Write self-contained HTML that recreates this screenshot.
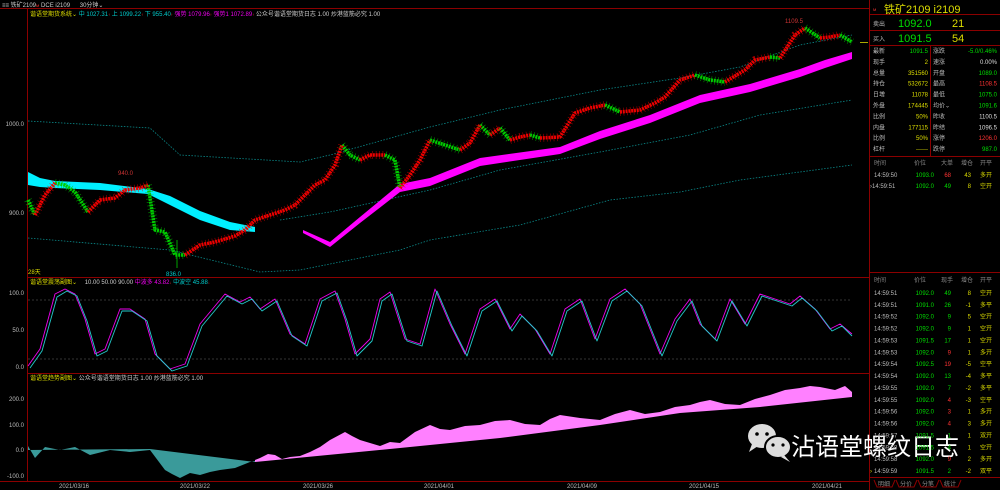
<!DOCTYPE html>
<html><head><meta charset="utf-8">
<style>
html,body{margin:0;padding:0;background:#000;width:1000px;height:490px;overflow:hidden;font-family:"Liberation Sans","Noto Sans CJK SC",sans-serif;}
svg{display:block}
text{font-family:"Liberation Sans","Noto Sans CJK SC",sans-serif;}
</style></head><body>
<svg width="1000" height="490" viewBox="0 0 1000 490" xmlns="http://www.w3.org/2000/svg">
<rect width="1000" height="490" fill="#000"/>
<g stroke="#8b0000" stroke-width="1" fill="none">
<line x1="0" y1="8.5" x2="870" y2="8.5"/>
<line x1="27.5" y1="8" x2="27.5" y2="481"/>
<line x1="27" y1="277.5" x2="870" y2="277.5"/>
<line x1="27" y1="373.5" x2="870" y2="373.5"/>
<line x1="0" y1="481.5" x2="870" y2="481.5"/>
<line x1="869.5" y1="0" x2="869.5" y2="490"/>
<line x1="870" y1="14.5" x2="1000" y2="14.5"/>
<line x1="870" y1="30.5" x2="1000" y2="30.5"/>
<line x1="870" y1="45.5" x2="1000" y2="45.5"/>
<line x1="870" y1="156.5" x2="1000" y2="156.5"/>
<line x1="930.5" y1="46" x2="930.5" y2="156"/>
<line x1="870" y1="272.5" x2="1000" y2="272.5"/>
<line x1="870" y1="477.5" x2="1000" y2="477.5"/>
</g>
<g stroke="#444" stroke-dasharray="2,2" stroke-width="0.7">
<line x1="28" y1="300" x2="852" y2="300"/>
<line x1="28" y1="359" x2="852" y2="359"/>
</g>
<text x="2" y="7" font-size="6" fill="#ccc">≡≡ 铁矿2109<tspan fill="#f33" font-size="4">M</tspan> DCE i2109  <tspan dx="8">30分钟⌄</tspan></text>
<text x="30" y="16" font-size="6" fill="#ccc"><tspan fill="#dd0">谐语堂期货系统⌄</tspan> <tspan fill="#0cc">中 1027.31</tspan><tspan fill="#f33" font-size="4">↑</tspan> <tspan fill="#0cc">上 1099.22</tspan><tspan fill="#f33" font-size="4">↑</tspan> <tspan fill="#0cc">下 955.40</tspan><tspan fill="#f33" font-size="4">↑</tspan> <tspan fill="#e0e">强势 1079.96</tspan><tspan fill="#f33" font-size="4">↑</tspan> <tspan fill="#e0e">强势1 1072.89</tspan><tspan fill="#f33" font-size="4">↑</tspan> 公众号谐语堂期货日志 1.00  炒港蓝筋必究 1.00</text>
<text x="30" y="284" font-size="6" fill="#ccc"><tspan fill="#dd0">谐语堂震荡副图⌄</tspan>  <tspan dx="6">10.00   50.00   90.00</tspan>  <tspan fill="#e0e">中波多 43.82</tspan><tspan fill="#f33" font-size="4">↓</tspan> <tspan fill="#0cc">中波空 45.88</tspan><tspan fill="#f33" font-size="4">↓</tspan></text>
<text x="30" y="380" font-size="6" fill="#ccc"><tspan fill="#dd0">谐语堂趋势副图⌄</tspan> 公众号谐语堂期货日志 1.00  炒港蓝筋必究 1.00</text>
<text x="28" y="274" font-size="6" fill="#dd0">28天</text>
<g font-size="6" fill="#bbb" text-anchor="end">
<text x="24" y="126">1000.0</text><text x="24" y="215">900.0</text>
<text x="24" y="295">100.0</text><text x="24" y="332">50.0</text><text x="24" y="369">0.0</text>
<text x="24" y="401">200.0</text><text x="24" y="427">100.0</text><text x="24" y="452">0.0</text><text x="24" y="478">-100.0</text>
</g>
<g font-size="6" fill="#bbb" text-anchor="middle">
<text x="74" y="488">2021/03/16</text><text x="195" y="488">2021/03/22</text><text x="318" y="488">2021/03/26</text><text x="439" y="488">2021/04/01</text><text x="582" y="488">2021/04/09</text><text x="704" y="488">2021/04/15</text><text x="827" y="488">2021/04/21</text>
</g>

<g fill="none" stroke="#0a8a8a" stroke-width="0.8" stroke-dasharray="1.5,1.5">
<polyline points="28,121 150,128 180,155 300,162 330,155 430,127 500,110 600,90 680,78 740,67 800,45 852,35"/>
<polyline points="280,220 330,212 430,190 500,170 600,152 690,135 760,115 852,100"/>
<polyline points="28,238 170,250 260,272 300,270 400,250 430,240 520,225 610,200 680,192 740,180 852,165"/>
</g>
<polygon fill="#00f0ff" points="28,172 40,178 55,181 100,183 148,189 170,196 200,211 230,222 255,227 255,232 230,230 200,220 170,205 148,194 100,190 55,188 40,187 28,185"/>
<polygon fill="#ff00ff" points="303,230 330,242 360,217 400,184 430,178 480,158 560,147 600,131 650,115 700,95 750,84 800,69 825,60 852,52 852,59 825,68 800,77 750,92 700,103 650,123 600,139 560,154 480,166 430,186 400,192 360,223 330,247 303,233"/>
<g fill="none" stroke-linejoin="round">
<g stroke="#0c0" stroke-width="3.5" stroke-dasharray="2,0.8">
<polyline points="28,200 35,215"/><polyline points="55,183 65,185 75,192 88,212"/><polyline points="148,185 155,230 165,232 175,255 185,255"/><polyline points="342,145 350,155 360,160"/><polyline points="385,155 395,160 400,188"/><polyline points="430,140 445,145 460,150"/><polyline points="480,125 490,135"/><polyline points="500,128 510,140"/><polyline points="530,135 540,138"/><polyline points="605,105 620,112"/><polyline points="695,75 710,80 725,82"/><polyline points="770,57 780,58"/><polyline points="805,28 820,38"/><polyline points="840,35 852,42"/>
</g>
<g stroke="#e00" stroke-width="3.5" stroke-dasharray="2,0.8">
<polyline points="35,215 45,195 55,183"/><polyline points="88,212 100,200 115,198 125,190 140,188 148,185"/><polyline points="185,255 200,245 215,242 235,236 245,230 255,220 270,215 285,210 295,205 305,195 315,185 325,180 335,165 342,145"/><polyline points="360,160 370,155 385,155"/><polyline points="400,188 410,175 420,160 430,140"/><polyline points="460,150 470,143 480,125"/><polyline points="490,135 500,128"/><polyline points="510,140 520,137 530,135"/><polyline points="540,138 560,137 575,113 590,108 605,105"/><polyline points="620,112 640,110 655,103 665,97 680,80 695,75"/><polyline points="725,82 745,70 755,60 770,57"/><polyline points="780,58 795,35 805,28"/><polyline points="820,38 830,37 840,35"/>
</g>
<g stroke="#0c0" stroke-width="8" stroke-dasharray="0.6,2.8" opacity="0.7">
<polyline points="28,200 35,215"/><polyline points="55,183 65,185 75,192 88,212"/><polyline points="148,185 155,230 165,232 175,255 185,255"/><polyline points="342,145 350,155 360,160"/><polyline points="385,155 395,160 400,188"/><polyline points="430,140 445,145 460,150"/><polyline points="480,125 490,135"/><polyline points="500,128 510,140"/><polyline points="530,135 540,138"/><polyline points="605,105 620,112"/><polyline points="695,75 710,80 725,82"/><polyline points="770,57 780,58"/><polyline points="805,28 820,38"/><polyline points="840,35 852,42"/>
</g>
<g stroke="#e00" stroke-width="8" stroke-dasharray="0.6,2.8" opacity="0.7">
<polyline points="35,215 45,195 55,183"/><polyline points="88,212 100,200 115,198 125,190 140,188 148,185"/><polyline points="185,255 200,245 215,242 235,236 245,230 255,220 270,215 285,210 295,205 305,195 315,185 325,180 335,165 342,145"/><polyline points="360,160 370,155 385,155"/><polyline points="400,188 410,175 420,160 430,140"/><polyline points="460,150 470,143 480,125"/><polyline points="490,135 500,128"/><polyline points="510,140 520,137 530,135"/><polyline points="540,138 560,137 575,113 590,108 605,105"/><polyline points="620,112 640,110 655,103 665,97 680,80 695,75"/><polyline points="725,82 745,70 755,60 770,57"/><polyline points="780,58 795,35 805,28"/><polyline points="820,38 830,37 840,35"/>
</g>
<line x1="177" y1="240" x2="177" y2="268" stroke="#0c0" stroke-width="0.8"/>
</g>
<text x="118" y="175" font-size="6" fill="#c33">940.0</text>
<text x="166" y="276" font-size="6" fill="#0cc">836.0</text>
<text x="785" y="23" font-size="6" fill="#c33">1109.5</text>
<line x1="860" y1="42.5" x2="868" y2="42.5" stroke="#aa0"/>

<polyline fill="none" stroke="#e0e" stroke-width="0.9" stroke-linejoin="round" points="28,366 40,349 55,294 65,289 75,294 85,319 95,354 105,349 120,309 130,309 145,319 155,354 170,369 185,364 200,324 225,294 240,302 250,297 260,309 275,299 290,334 305,344 320,299 335,291 345,319 355,354 370,339 380,299 390,292 405,339 420,344 435,289 450,324 465,354 480,309 495,299 510,329 520,314 535,329 550,354 565,309 580,299 595,339 610,299 625,289 640,304 660,354 675,319 690,299 700,324 715,339 730,299 745,324 760,294 775,299 790,304 800,296 815,309 830,329 840,324 852,334"/>
<polyline fill="none" stroke="#2cc" stroke-width="0.9" stroke-linejoin="round" points="30,368 42,351 57,297 67,291 77,296 87,321 97,356 107,351 122,311 132,311 147,321 157,356 172,371 187,366 202,326 227,296 242,304 252,299 262,311 277,301 292,336 307,346 322,301 337,293 347,321 357,356 372,341 382,301 392,294 407,341 422,346 437,291 452,326 467,356 482,311 497,301 512,331 522,316 537,331 552,356 567,311 582,301 597,341 612,301 627,291 642,306 662,356 677,321 692,301 702,326 717,341 732,301 747,326 762,296 777,301 792,306 802,298 817,311 832,331 842,326 852,336"/>

<polygon fill="#3a9a9a" points="28,446 35,458 45,447 60,450 75,447 90,455 110,450 130,452 150,450 165,470 172,474 180,478 190,473 200,475 210,472 220,470 235,468 250,462 255,461 255,462 150,449 28,450"/>
<polygon fill="#ff80ff" points="255,460 260,458 268,454 275,455 282,459 290,457 300,456 310,452 320,447 330,440 345,432 352,436 360,440 370,443 380,446 390,442 400,443 415,432 430,425 440,429 450,430 465,426 480,425 495,421 510,420 525,424 540,425 550,419 560,415 580,418 600,420 615,414 630,410 645,414 660,412 675,407 690,405 700,402 710,400 725,404 740,405 755,399 770,395 785,390 800,388 810,386 820,387 835,390 845,386 852,392 852,397 760,407 680,413 600,425 500,438 400,448 255,462"/>

<g fill="#ddd">
<ellipse cx="762" cy="436" rx="14" ry="12"/>
<path d="M752 444 L749 452 L758 446Z"/>
<ellipse cx="778" cy="447" rx="13" ry="11" stroke="#000" stroke-width="2"/>
<path d="M784 455 L790 462 L781 457Z"/>
<circle cx="757" cy="434" r="1.8" fill="#000"/><circle cx="767" cy="434" r="1.8" fill="#000"/>
<circle cx="773" cy="445" r="1.6" fill="#000"/><circle cx="783" cy="445" r="1.6" fill="#000"/>
</g>
<text x="791" y="455" font-size="24" fill="#fff" font-family="'Noto Sans CJK SC',sans-serif">沾语堂螺纹日志</text>

<text x="873" y="11" font-size="4" fill="#f33">M</text>
<text x="884" y="13" font-size="11" fill="#dd0">铁矿2109  i2109</text>
<text x="873" y="26" font-size="6" fill="#bbb">卖出</text><text x="898" y="27" font-size="11" fill="#0d0">1092.0</text><text x="952" y="27" font-size="11" fill="#dd0">21</text>
<text x="873" y="41" font-size="6" fill="#bbb">买入</text><text x="898" y="42" font-size="11" fill="#0d0">1091.5</text><text x="952" y="42" font-size="11" fill="#dd0">54</text>
<g font-size="6">
<g fill="#bbb"><text x="873" y="53">最新</text><text x="873" y="63.9">现手</text><text x="873" y="74.8">总量</text><text x="873" y="85.7">持仓</text><text x="873" y="96.6">日增</text><text x="873" y="107.5">外盘</text><text x="873" y="118.4">比例</text><text x="873" y="129.3">内盘</text><text x="873" y="140.2">比例</text><text x="873" y="151.1">杠杆</text>
<text x="933" y="53">涨跌</text><text x="933" y="63.9">速涨</text><text x="933" y="74.8">开盘</text><text x="933" y="85.7">最高</text><text x="933" y="96.6">最低</text><text x="933" y="107.5">均价⌄</text><text x="933" y="118.4">昨收</text><text x="933" y="129.3">昨结</text><text x="933" y="140.2">涨停</text><text x="933" y="151.1">跌停</text></g>
<g text-anchor="end" fill="#dd0"><text x="928" y="53" fill="#0d0">1091.5</text><text x="928" y="63.9">2</text><text x="928" y="74.8">351560</text><text x="928" y="85.7">532672</text><text x="928" y="96.6">11078</text><text x="928" y="107.5">174445</text><text x="928" y="118.4">50%</text><text x="928" y="129.3">177115</text><text x="928" y="140.2">50%</text><text x="928" y="151.1">------</text>
<text x="997" y="53" fill="#0d0">-5.0/0.46%</text><text x="997" y="63.9" fill="#ddd">0.00%</text><text x="997" y="74.8" fill="#0d0">1089.0</text><text x="997" y="85.7" fill="#f33">1108.5</text><text x="997" y="96.6" fill="#0d0">1075.0</text><text x="997" y="107.5" fill="#0d0">1091.6</text><text x="997" y="118.4" fill="#ddd">1100.5</text><text x="997" y="129.3" fill="#ddd">1096.5</text><text x="997" y="140.2" fill="#f33">1206.0</text><text x="997" y="151.1" fill="#0d0">987.0</text></g>

<g fill="#888" text-anchor="middle"><text x="880" y="165">时间</text><text x="920" y="165">价位</text><text x="947" y="165">大单</text><text x="967" y="165">增仓</text><text x="986" y="165">开平</text>
<text x="880" y="282">时间</text><text x="920" y="282">价位</text><text x="947" y="282">现手</text><text x="967" y="282">增仓</text><text x="986" y="282">开平</text></g>
<text x="874" y="177" fill="#bbb">14:59:50</text><text x="934" y="177" fill="#0d0" text-anchor="end">1093.0</text><text x="951" y="177" fill="#f33" text-anchor="end">68</text><text x="971" y="177" fill="#dd0" text-anchor="end">43</text><text x="980" y="177" fill="#dd0">多开</text>
<text x="870" y="188" fill="#bbb">›14:59:51</text><text x="934" y="188" fill="#0d0" text-anchor="end">1092.0</text><text x="951" y="188" fill="#0d0" text-anchor="end">49</text><text x="971" y="188" fill="#dd0" text-anchor="end">8</text><text x="980" y="188" fill="#dd0">空开</text>

<g fill="#bbb"><text x="874" y="295">14:59:51</text><text x="874" y="306.9">14:59:51</text><text x="874" y="318.7">14:59:52</text><text x="874" y="330.6">14:59:52</text><text x="874" y="342.5">14:59:53</text><text x="874" y="354.4">14:59:53</text><text x="874" y="366.2">14:59:54</text><text x="874" y="378.1">14:59:54</text><text x="874" y="390">14:59:55</text><text x="874" y="401.8">14:59:55</text><text x="874" y="413.7">14:59:56</text><text x="874" y="425.6">14:59:56</text><text x="874" y="437.4">14:59:57</text><text x="874" y="449.3">14:59:58</text><text x="874" y="461.2">14:59:58</text><text x="874" y="473">14:59:59</text></g>
<g fill="#0d0" text-anchor="end"><text x="934" y="295">1092.0</text><text x="934" y="306.9">1091.0</text><text x="934" y="318.7">1092.0</text><text x="934" y="330.6">1092.0</text><text x="934" y="342.5">1091.5</text><text x="934" y="354.4">1092.0</text><text x="934" y="366.2">1092.5</text><text x="934" y="378.1">1092.0</text><text x="934" y="390">1092.0</text><text x="934" y="401.8">1092.0</text><text x="934" y="413.7">1092.0</text><text x="934" y="425.6">1092.0</text><text x="934" y="437.4">1091.5</text><text x="934" y="449.3">1091.5</text><text x="934" y="461.2">1092.0</text><text x="934" y="473">1091.5</text></g>
<g fill="#0d0" text-anchor="end"><text x="951" y="295">49</text><text x="951" y="306.9">26</text><text x="951" y="318.7">9</text><text x="951" y="330.6">9</text><text x="951" y="342.5">17</text><text x="951" y="354.4" fill="#f33">9</text><text x="951" y="366.2" fill="#f33">19</text><text x="951" y="378.1">13</text><text x="951" y="390">7</text><text x="951" y="401.8" fill="#f33">4</text><text x="951" y="413.7" fill="#f33">3</text><text x="951" y="425.6" fill="#f33">4</text><text x="951" y="437.4">1</text><text x="951" y="449.3">4</text><text x="951" y="461.2" fill="#f33">9</text><text x="951" y="473">2</text></g>
<g fill="#dd0" text-anchor="end"><text x="971" y="295">8</text><text x="971" y="306.9">-1</text><text x="971" y="318.7">5</text><text x="971" y="330.6">1</text><text x="971" y="342.5">1</text><text x="971" y="354.4">1</text><text x="971" y="366.2">-5</text><text x="971" y="378.1">-4</text><text x="971" y="390">-2</text><text x="971" y="401.8">-3</text><text x="971" y="413.7">1</text><text x="971" y="425.6">3</text><text x="971" y="437.4">1</text><text x="971" y="449.3">1</text><text x="971" y="461.2">2</text><text x="971" y="473">-2</text></g>
<g fill="#dd0"><text x="980" y="295">空开</text><text x="980" y="306.9">多平</text><text x="980" y="318.7">空开</text><text x="980" y="330.6">空开</text><text x="980" y="342.5">空开</text><text x="980" y="354.4">多开</text><text x="980" y="366.2">空平</text><text x="980" y="378.1">多平</text><text x="980" y="390">多平</text><text x="980" y="401.8">空平</text><text x="980" y="413.7">多开</text><text x="980" y="425.6">多开</text><text x="980" y="437.4">双开</text><text x="980" y="449.3">空开</text><text x="980" y="461.2">多开</text><text x="980" y="473">双平</text></g>
<text x="870" y="473" fill="#dd0">›</text>
</g>
<g font-size="6" fill="#888" stroke="#8b0000">
<path d="M874 480 l3 7 h15 l3 -7 M896 480 l3 7 h15 l3 -7 M918 480 l3 7 h15 l3 -7 M940 480 l3 7 h15 l3 -7" fill="none"/>
<text x="878" y="486" stroke="none">明细</text><text x="900" y="486" stroke="none">分价</text><text x="922" y="486" stroke="none">分笔</text><text x="944" y="486" stroke="none">统计</text>
</g>
</svg>
</body></html>
